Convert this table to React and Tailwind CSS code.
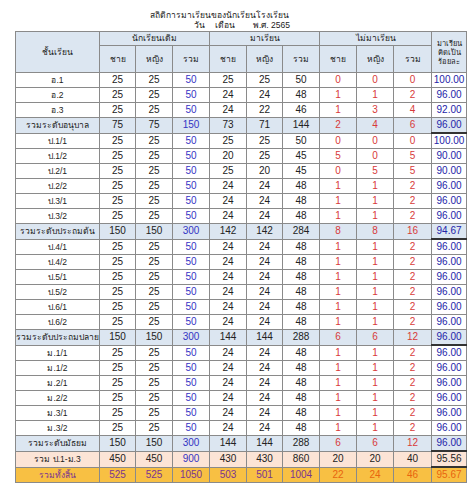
const ROWS = [
  { name: 'อ.1', d: [25, 25, 50, 25, 25, 50, 0, 0, 0], p: '100.00' },
  { name: 'อ.2', d: [25, 25, 50, 24, 24, 48, 1, 1, 2], p: '96.00' },
  { name: 'อ.3', d: [25, 25, 50, 24, 22, 46, 1, 3, 4], p: '92.00' },
  { name: 'รวมระดับอนุบาล', d: [75, 75, 150, 73, 71, 144, 2, 4, 6], p: '96.00', kind: 'sum' },
  { name: 'ป.1/1', d: [25, 25, 50, 25, 25, 50, 0, 0, 0], p: '100.00' },
  { name: 'ป.1/2', d: [25, 25, 50, 20, 25, 45, 5, 0, 5], p: '90.00' },
  { name: 'ป.2/1', d: [25, 25, 50, 25, 20, 45, 0, 5, 5], p: '90.00' },
  { name: 'ป.2/2', d: [25, 25, 50, 24, 24, 48, 1, 1, 2], p: '96.00' },
  { name: 'ป.3/1', d: [25, 25, 50, 24, 24, 48, 1, 1, 2], p: '96.00' },
  { name: 'ป.3/2', d: [25, 25, 50, 24, 24, 48, 1, 1, 2], p: '96.00' },
  { name: 'รวมระดับประถมต้น', d: [150, 150, 300, 142, 142, 284, 8, 8, 16], p: '94.67', kind: 'sum' },
  { name: 'ป.4/1', d: [25, 25, 50, 24, 24, 48, 1, 1, 2], p: '96.00' },
  { name: 'ป.4/2', d: [25, 25, 50, 24, 24, 48, 1, 1, 2], p: '96.00' },
  { name: 'ป.5/1', d: [25, 25, 50, 24, 24, 48, 1, 1, 2], p: '96.00' },
  { name: 'ป.5/2', d: [25, 25, 50, 24, 24, 48, 1, 1, 2], p: '96.00' },
  { name: 'ป.6/1', d: [25, 25, 50, 24, 24, 48, 1, 1, 2], p: '96.00' },
  { name: 'ป.6/2', d: [25, 25, 50, 24, 24, 48, 1, 1, 2], p: '96.00' },
  { name: 'รวมระดับประถมปลาย', d: [150, 150, 300, 144, 144, 288, 6, 6, 12], p: '96.00', kind: 'sum' },
  { name: 'ม.1/1', d: [25, 25, 50, 24, 24, 48, 1, 1, 2], p: '96.00' },
  { name: 'ม.1/2', d: [25, 25, 50, 24, 24, 48, 1, 1, 2], p: '96.00' },
  { name: 'ม.2/1', d: [25, 25, 50, 24, 24, 48, 1, 1, 2], p: '96.00' },
  { name: 'ม.2/2', d: [25, 25, 50, 24, 24, 48, 1, 1, 2], p: '96.00' },
  { name: 'ม.3/1', d: [25, 25, 50, 24, 24, 48, 1, 1, 2], p: '96.00' },
  { name: 'ม.3/2', d: [25, 25, 50, 24, 24, 48, 1, 1, 2], p: '96.00' },
  { name: 'รวมระดับมัธยม', d: [150, 150, 300, 144, 144, 288, 6, 6, 12], p: '96.00', kind: 'sum' },
  { name: 'รวม ป.1-ม.3', d: [450, 450, 900, 430, 430, 860, 20, 20, 40], p: '95.56', kind: 'mid' },
  { name: 'รวมทั้งสิ้น', d: [525, 525, 1050, 503, 501, 1004, 22, 24, 46], p: '95.67', kind: 'total' },
]

const WIDTHS = [84, 36, 37, 37, 37, 36, 37, 37, 37, 38, 35]

function cellColor(kind, i) {
  if (kind === 'total') return i >= 6 ? 'text-[#e8650f]' : 'text-[#7a3590]'
  if (kind === 'mid') return i === 2 ? 'text-[#3434c4]' : 'text-[#222]'
  if (i === 2) return 'text-[#3434c4]'
  if (i >= 6) return 'text-[#d83a3a]'
  return 'text-[#222]'
}

function rowBg(kind) {
  if (kind === 'sum') return 'bg-[#dce6f1]'
  if (kind === 'mid') return 'bg-[#fce4d6]'
  if (kind === 'total') return 'bg-[#f8c043]'
  return 'bg-white'
}

function Cell({ className, children }) {
  return (
    <td className={'border border-[#8a8a8a] text-center p-0 ' + className}>
      <div className="h-[14px] leading-[14px] overflow-hidden whitespace-nowrap">{children}</div>
    </td>
  )
}

export default function App() {
  const th = 'border border-[#8a8a8a] text-center p-0 font-normal bg-[#dce6f1] text-[#222] text-[8.5px]'

  return (
    <div className="w-[474px] h-[488px] bg-white pt-[10px] text-[10px] font-['Tahoma','Liberation_Sans',sans-serif] text-[#222]">
      <div className="pl-[150px] h-[10px] leading-[10px] text-[8.5px] whitespace-nowrap overflow-hidden">
        สถิติการมาเรียนของนักเรียนโรงเรียน
      </div>
      <div className="flex h-[10px] leading-[10px] text-[8.5px] whitespace-nowrap overflow-hidden">
        <span className="ml-[194px]">วัน</span>
        <span className="ml-[10px]">เดือน</span>
        <span className="ml-[18px]">พ.ศ. 2565</span>
      </div>
      <table className="ml-[15px] mt-[1px] table-fixed border-collapse w-[451px]">
        <colgroup>
          {WIDTHS.map((w, i) => (
            <col key={i} style={{ width: w }} />
          ))}
        </colgroup>
        <thead>
          <tr>
            <th rowSpan={2} className={th}>ชั้นเรียน</th>
            <th colSpan={3} className={th}>
              <div className="h-[13px] leading-[13px] overflow-hidden">นักเรียนเดิม</div>
            </th>
            <th colSpan={3} className={th}>
              <div className="h-[13px] leading-[13px] overflow-hidden">มาเรียน</div>
            </th>
            <th colSpan={3} className={th}>
              <div className="h-[13px] leading-[13px] overflow-hidden">ไม่มาเรียน</div>
            </th>
            <th rowSpan={2} className={th + ' !text-[7.5px]'}>
              <div className="leading-[9px] pt-[1px] whitespace-nowrap">
                <div className="h-[9px] overflow-hidden">มาเรียน</div>
                <div className="h-[9px] overflow-hidden">คิดเป็น</div>
                <div className="h-[9px] overflow-hidden">ร้อยละ</div>
              </div>
            </th>
          </tr>
          <tr>
            {['ชาย', 'หญิง', 'รวม', 'ชาย', 'หญิง', 'รวม', 'ชาย', 'หญิง', 'รวม'].map((t, i) => (
              <th key={i} className={th}>
                <div className="h-[26px] leading-[26px] overflow-hidden">{t}</div>
              </th>
            ))}
          </tr>
        </thead>
        <tbody>
          {ROWS.map((r) => (
            <tr key={r.name} className={rowBg(r.kind)}>
              <Cell className={'text-[8.5px] ' + (r.kind === 'total' ? 'text-[#7a3590]' : 'text-[#222]')}>{r.name}</Cell>
              {r.d.map((v, i) => (
                <Cell key={i} className={cellColor(r.kind, i)}>{v}</Cell>
              ))}
              <Cell
                className={
                  r.kind === 'total'
                    ? 'text-[#e8650f]'
                    : r.kind === 'mid'
                    ? 'text-[#222] border-b-2 border-b-[#333]'
                    : r.kind === 'sum'
                    ? 'text-[#2424a8] border-b-2 border-b-[#333]'
                    : 'text-[#2424a8]'
                }
              >
                {r.p}
              </Cell>
            </tr>
          ))}
        </tbody>
      </table>
    </div>
  )
}
